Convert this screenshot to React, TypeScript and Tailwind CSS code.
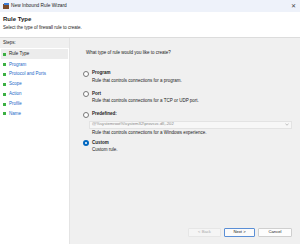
import React from 'react';

const steps = ['Program', 'Protocol and Ports', 'Scope', 'Action', 'Profile', 'Name'];

const options = [
  { label: 'Program', desc: 'Rule that controls connections for a program.' },
  { label: 'Port', desc: 'Rule that controls connections for a TCP or UDP port.' },
];

function Radio({ checked }: { checked?: boolean }) {
  return checked ? (
    <span className="w-[6px] h-[6px] rounded-full bg-[#0067c0] flex items-center justify-center shrink-0">
      <span className="w-[2px] h-[2px] rounded-full bg-white" />
    </span>
  ) : (
    <span className="w-[6px] h-[6px] rounded-full border border-[#777] bg-white shrink-0" />
  );
}

function Bullet() {
  return <span className="w-[3px] h-[3px] bg-[#3cb043] shrink-0" />;
}

export default function App() {
  return (
    <div className="w-[300px] h-[244px] flex flex-col bg-[#f0f0f0] text-[#1a1a1a] overflow-hidden" style={{ fontFamily: '"Liberation Sans", Arial, sans-serif' }}>
      {/* title bar */}
      <div className="h-[12px] bg-[#eef2fa] flex items-center px-[3px] gap-[2px] shrink-0">
        <svg width="6" height="6" viewBox="0 0 6 6">
          <rect x="0" y="1" width="6" height="5" fill="#7a4a2a" />
          <rect x="1" y="0" width="5" height="2" fill="#3a7bd5" />
        </svg>
        <span className="text-[4.8px] text-[#222]">New Inbound Rule Wizard</span>
        <span className="ml-auto mr-[1px] text-[6px] text-[#444] leading-none">✕</span>
      </div>

      {/* header */}
      <div className="h-[26px] bg-white px-[3px] pt-[4px] border-b border-[#dcdcdc] shrink-0">
        <div className="text-[6px] font-bold leading-none">Rule Type</div>
        <div className="text-[4.5px] mt-[4px] leading-none">Select the type of firewall rule to create.</div>
      </div>

      <div className="flex flex-1 min-h-0">
        {/* steps */}
        <div className="w-[70px] bg-white border-r border-[#e4e4e4] flex flex-col shrink-0">
          <div className="h-[10px] bg-[#f0f0f0] flex items-center px-[3px] text-[4.5px]">Steps:</div>
          <div className="h-[10px] mt-[1px] mb-[1px] mx-[1px] bg-[#ececec] flex items-center gap-[3px] px-[2px] text-[4.5px]">
            <Bullet />
            Rule Type
          </div>
          {steps.map((s) => (
            <div key={s} className="h-[9.8px] flex items-center gap-[3px] px-[3px] text-[4.5px] text-[#1a66c7]">
              <Bullet />
              {s}
            </div>
          ))}
        </div>

        {/* content */}
        <div className="flex-1 flex flex-col pl-[13px] pr-[8px]">
          <div className="text-[4.5px] mt-[13px] ml-[3px] leading-none">What type of rule would you like to create?</div>

          <div className="flex flex-col mt-[15px] gap-[8px]">
            {options.map((o) => (
              <div key={o.label} className="flex flex-col">
                <div className="flex items-center gap-[3px]">
                  <Radio />
                  <span className="text-[4.5px] font-bold leading-none">{o.label}</span>
                </div>
                <div className="text-[4.5px] ml-[9px] mt-[2px] leading-none">{o.desc}</div>
              </div>
            ))}

            <div className="flex flex-col">
              <div className="flex items-center gap-[3px]">
                <Radio />
                <span className="text-[4.5px] font-bold leading-none">Predefined:</span>
              </div>
              <div className="ml-[6px] mt-[3px] h-[8px] bg-[#f7f7f7] border border-[#e3e3e3] flex items-center px-[2px] text-[4.2px] text-[#888]">
                @%systemroot%\system32\provsvc.dll,-202
                <svg className="ml-auto" width="4" height="3" viewBox="0 0 4 3">
                  <path d="M0.5 0.8 L2 2.2 L3.5 0.8" fill="none" stroke="#999" strokeWidth="0.6" />
                </svg>
              </div>
              <div className="text-[4.5px] ml-[9px] mt-[2px] leading-none">Rule that controls connections for a Windows experience.</div>
            </div>

            <div className="flex flex-col -mt-[3px]">
              <div className="flex items-center gap-[3px]">
                <Radio checked />
                <span className="text-[4.5px] font-bold leading-none">Custom</span>
              </div>
              <div className="text-[4.5px] ml-[9px] mt-[2px] leading-none">Custom rule.</div>
            </div>
          </div>

          <div className="mt-auto mb-[7px] flex justify-end gap-[3px]">
            <button className="w-[33px] h-[9px] bg-[#f5f5f5] border border-[#e6e6e6] rounded-[1px] text-[4.2px] text-[#aaa]">&lt; Back</button>
            <button className="w-[31px] h-[9px] bg-[#fbfbfb] border border-[#5b8fd6] rounded-[1px] text-[4.2px]">Next &gt;</button>
            <button className="w-[34px] h-[9px] bg-[#fdfdfd] border border-[#cfcfcf] rounded-[1px] text-[4.2px]">Cancel</button>
          </div>
        </div>
      </div>
    </div>
  );
}
